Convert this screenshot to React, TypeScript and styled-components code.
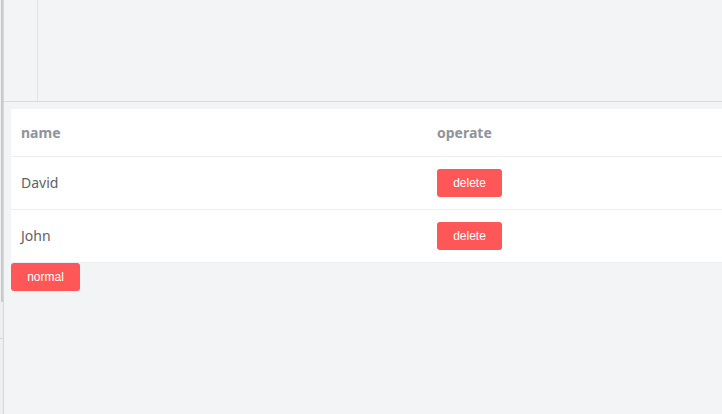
import styled, { createGlobalStyle } from "styled-components";

const GlobalStyle = createGlobalStyle`
  html, body {
    margin: 0;
    padding: 0;
    background: #f3f4f6;
  }
  #root {
    height: 100vh;
  }
`;

const Shell = styled.div`
  display: flex;
  height: 100vh;
  overflow: hidden;
`;

const Rail = styled.div`
  width: 3px;
  flex-shrink: 0;
  background: #eeeff1;
  border-right: 1px solid #d6d7d9;
  display: flex;
  flex-direction: column;
`;

const RailThumb = styled.div`
  height: 302px;
  margin-left: 1px;
  background: #c9cacc;
`;

const RailMark = styled.div`
  margin-top: 36px;
  height: 1px;
  background: #d6d7d9;
`;

const Main = styled.div`
  flex: 1;
  display: flex;
  flex-direction: column;
  min-width: 0;
`;

const TopBar = styled.div`
  height: 101px;
  flex-shrink: 0;
  display: flex;
  border-bottom: 1px solid #d9dadc;
`;

const TopAside = styled.div`
  width: 33px;
  border-right: 1px solid #e3e4e6;
`;

const Content = styled.div`
  padding: 7px 0 0 7px;
`;

const Table = styled.table`
  width: 1000px;
  background: #ffffff;
  border-collapse: collapse;
  font-family: "Noto Sans", "Open Sans", sans-serif;
  font-size: 14px;
`;

const HeadCell = styled.th<{ $width?: number }>`
  width: ${(p) => (p.$width ? `${p.$width}px` : "auto")};
  height: 47px;
  padding: 0 10px;
  box-sizing: border-box;
  text-align: left;
  font-weight: 700;
  color: #909399;
  border-bottom: 1px solid #ebeef5;
`;

const Cell = styled.td`
  height: 53px;
  padding: 0 10px;
  box-sizing: border-box;
  color: #606266;
  border-bottom: 1px solid #ebeef5;
  vertical-align: middle;
`;

const DangerButton = styled.button<{ $width: number }>`
  width: ${(p) => p.$width}px;
  height: 28px;
  padding: 0;
  border: none;
  border-radius: 3px;
  background: #ff5757;
  color: #ffffff;
  font-family: "Liberation Sans", Arial, sans-serif;
  font-size: 12px;
  cursor: pointer;
  display: block;
`;

const Footer = styled.div`
  display: flex;
`;

const people = [{ name: "David" }, { name: "John" }];

const App = () => {
  return (
    <>
      <GlobalStyle />
      <Shell>
        <Rail>
          <RailThumb />
          <RailMark />
        </Rail>
        <Main>
          <TopBar>
            <TopAside />
          </TopBar>
          <Content>
            <Table>
              <thead>
                <tr>
                  <HeadCell $width={416}>name</HeadCell>
                  <HeadCell>operate</HeadCell>
                </tr>
              </thead>
              <tbody>
                {people.map((person) => (
                  <tr key={person.name}>
                    <Cell>{person.name}</Cell>
                    <Cell>
                      <DangerButton $width={65}>delete</DangerButton>
                    </Cell>
                  </tr>
                ))}
              </tbody>
            </Table>
            <Footer>
              <DangerButton $width={69}>normal</DangerButton>
            </Footer>
          </Content>
        </Main>
      </Shell>
    </>
  );
};

export default App;
